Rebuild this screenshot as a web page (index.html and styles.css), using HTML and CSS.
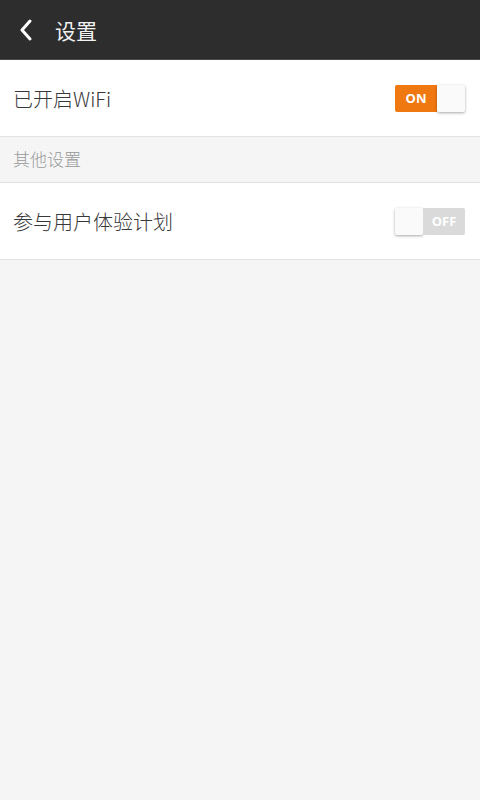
FILE: index.html
```html
<!DOCTYPE html>
<html>
<head>
    <meta charset="UTF-8" />
    <title>设置</title>
    <link rel="stylesheet" href="styles.css">
</head>
<body>

    <div class="titlebar">
        <svg class="back" width="14" height="22" viewBox="0 0 14 22">
            <path d="M11 2 L3 11 L11 20" fill="none" stroke="#ffffff" stroke-width="3" stroke-linecap="round" stroke-linejoin="round"/>
        </svg>
        <span class="title">设置</span>
    </div>

    <div class="row">
        <span class="label">已开启WiFi</span>
        <div class="switch on">
            <span class="track">ON</span>
            <span class="knob"></span>
        </div>
    </div>

    <div class="section">其他设置</div>

    <div class="row">
        <span class="label">参与用户体验计划</span>
        <div class="switch off">
            <span class="knob"></span>
            <span class="track">OFF</span>
        </div>
    </div>

</body>
</html>
```

FILE: styles.css
```css
body {
    margin: 0;
    background-color: #f5f5f5;
    font-family: "Noto Sans CJK SC", "Noto Sans", sans-serif;
}

.titlebar {
    display: flex;
    align-items: center;
    height: 59px;
    background-color: #2d2d2d;
    border-bottom: 1px solid #4a4a4a;
    padding-left: 19px;
}

.back {
    margin-right: 22px;
}

.title {
    color: #f2f2f2;
    font-size: 21px;
}

.row {
    display: flex;
    align-items: center;
    justify-content: space-between;
    height: 76px;
    background-color: #ffffff;
    border-bottom: 1px solid #e2e2e2;
    padding: 0 15px 0 13px;
}

.label {
    color: #383838;
    font-size: 20px;
    font-weight: 300;
}

.section {
    height: 45px;
    line-height: 43px;
    padding-left: 13px;
    color: #999999;
    font-size: 17px;
    font-weight: 300;
    border-bottom: 1px solid #e2e2e2;
}

.switch {
    display: flex;
    width: 70px;
    height: 27px;
    border-radius: 2px;
}

.switch .track {
    flex: 1;
    color: #ffffff;
    font-family: "Open Sans", "Liberation Sans", sans-serif;
    font-weight: bold;
    font-size: 13px;
    text-align: center;
    line-height: 27px;
}

.switch .knob {
    width: 28px;
    background-color: #fafafa;
    border-radius: 2px;
    box-shadow: 0 1px 3px rgba(0, 0, 0, 0.35);
}

.switch.on .track {
    background-color: #f07811;
    border-radius: 2px 0 0 2px;
}

.switch.off .track {
    background-color: #dadada;
    border-radius: 0 2px 2px 0;
}
```
